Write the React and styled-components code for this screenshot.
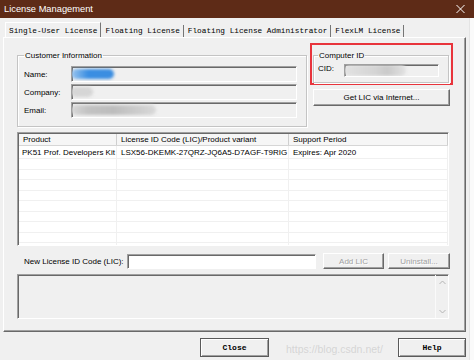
import styled, { createGlobalStyle } from "styled-components";

const GlobalStyle = createGlobalStyle`
  html, body {
    margin: 0;
    padding: 0;
    background: #f0f0f0;
  }
  * {
    box-sizing: border-box;
  }
`;

const Window = styled.div`
  width: 474px;
  height: 360px;
  display: flex;
  flex-direction: column;
  background: #f0f0f0;
  font-family: "Liberation Sans", Arial, sans-serif;
  font-size: 8px;
  color: #000;
  overflow: hidden;
`;

const TitleBar = styled.div`
  height: 18px;
  flex-shrink: 0;
  display: flex;
  align-items: center;
  justify-content: space-between;
  padding: 0 9px 0 4px;
  background: #5e2b17;
  color: #fff;
  font-size: 9.3px;
`;

const Body = styled.div`
  flex: 1;
  display: flex;
  min-height: 0;
`;

const Main = styled.div`
  flex: 1;
  display: flex;
  flex-direction: column;
  padding-top: 4px;
  min-width: 0;
`;

const Edge = styled.div`
  width: 5px;
  background: #fafafa;
  border-left: 1px solid #e4e4e4;
`;

const TabStrip = styled.div`
  height: 15px;
  display: flex;
  align-items: flex-end;
  padding-left: 5px;
`;

const Tab = styled.div`
  height: ${({ $active }) => ($active ? "15px" : "12px")};
  display: flex;
  align-items: flex-end;
  padding: 0 3px 1px ${({ $active }) => ($active ? "3px" : "4px")};
  font-family: "Liberation Mono", "Courier New", monospace;
  font-size: 7.75px;
  line-height: 9px;
  white-space: nowrap;
  border-right: 1px solid #767676;
  border-top: ${({ $active }) => ($active ? "1px solid #fff" : "none")};
  border-left: ${({ $active }) => ($active ? "1px solid #fff" : "none")};
`;

const Panel = styled.div`
  flex: 1;
  margin: 0 3px;
  display: flex;
  flex-direction: column;
  padding: 5px 12px 12px 13px;
  border: 1px solid;
  border-color: #fff #696969 #696969 #fff;
  box-shadow: inset -1px -1px 0 #a0a0a0;
`;

const TopRow = styled.div`
  display: flex;
  align-items: flex-start;
  gap: 3px;
`;

const Group = styled.fieldset`
  margin: 0;
  min-width: 0;
  border: 1px solid #c4c4c4;
  box-shadow: inset 1px 1px 0 #fff, 1px 1px 0 #fff;
`;

const Legend = styled.legend`
  padding: 0 1px;
  font-size: 8px;
  line-height: 11px;
`;

const CustomerGroup = styled(Group)`
  width: 290px;
  height: 77.5px;
  margin-top: 6.5px;
  padding: 5.5px 9px 0 6px;
  display: flex;
  flex-direction: column;
  gap: 2px;
`;

const FieldRow = styled.div`
  height: 16px;
  display: flex;
  align-items: center;
`;

const Label = styled.span`
  width: ${({ $w }) => $w}px;
  flex-shrink: 0;
  white-space: nowrap;
`;

const Field = styled.div`
  width: ${({ $w }) => $w}px;
  height: ${({ $h }) => $h}px;
  display: flex;
  align-items: center;
  border: 1px solid;
  border-color: #a0a0a0 #fff #fff #a0a0a0;
  box-shadow: inset 1px 1px 0 #696969;
  background: ${({ $bg }) => $bg || "transparent"};
  overflow: hidden;
`;

const Blur = styled.div`
  width: ${({ $w }) => $w}px;
  height: ${({ $h }) => $h || 10}px;
  margin-left: -1px;
  border-radius: 5px;
  background: ${({ $c }) => $c};
  filter: blur(1.4px);
`;

const RightCol = styled.div`
  width: 143px;
  display: flex;
  flex-direction: column;
  gap: 4px;
`;

const RedBox = styled.div`
  height: 42px;
  padding: 4.5px 2px 0 1px;
  border: 2px solid #e8343c;
`;

const CidGroup = styled(Group)`
  height: 33.5px;
  padding: 3.5px 8px 0 4px;
  display: flex;
  align-items: flex-start;
`;

const Button = styled.button`
  font-family: ${({ $mono }) =>
    $mono ? '"Liberation Mono", "Courier New", monospace' : "inherit"};
  font-size: 8px;
  font-weight: ${({ $mono }) => ($mono ? "bold" : "normal")};
  width: ${({ $w }) => ($w ? `${$w}px` : "auto")};
  height: ${({ $h }) => $h || 17}px;
  margin: 0;
  padding: 0;
  background: #f0f0f0;
  color: ${({ disabled }) => (disabled ? "#a0a0a0" : "#000")};
  text-shadow: ${({ disabled }) => (disabled ? "1px 1px 0 #fff" : "none")};
  border: 1px solid;
  border-color: ${({ $strong }) =>
    $strong ? "#5a5a5a" : "#fff #696969 #696969 #fff"};
  box-shadow: ${({ $strong }) =>
    $strong
      ? "inset 1px 1px 0 #fff, inset -1px -1px 0 #a0a0a0"
      : "inset -1px -1px 0 #a0a0a0"};
  cursor: default;
`;

const GetLicButton = styled(Button)`
  margin-left: 3px;
  width: 137px;
`;

const List = styled.div`
  margin-top: 5px;
  width: 432px;
  height: 114px;
  display: flex;
  flex-direction: column;
  background: #fff;
  border: 1px solid;
  border-color: #a0a0a0 #fff #fff #a0a0a0;
  box-shadow: inset 1px 1px 0 #696969;
  padding: 1px 0 0 1px;
  overflow: hidden;
`;

const ListRow = styled.div`
  display: grid;
  grid-template-columns: 98px 172px 1fr;
  height: ${({ $h }) => $h}px;
  flex-shrink: 0;
  background: ${({ $head }) => ($head ? "#f6f6f6" : "#fff")};
  border-bottom: 1px solid ${({ $head }) => ($head ? "#d6d6d6" : "#f0f0f0")};
`;

const Cell = styled.div`
  padding-left: ${({ $pad }) => $pad || 4}px;
  display: flex;
  align-items: center;
  white-space: nowrap;
  overflow: hidden;
  border-right: 1px solid ${({ $head }) => ($head ? "#cfcfcf" : "#f0f0f0")};
`;

const LicRow = styled.div`
  margin-top: 7px;
  height: 16px;
  display: flex;
  align-items: center;
  gap: 4px;
  padding-left: 7px;
`;

const LicInput = styled(Field)`
  margin-left: -4px;
  margin-right: 3px;
`;

const MsgBox = styled.div`
  margin-top: 5px;
  width: 432px;
  height: 45px;
  display: flex;
  justify-content: flex-end;
  border: 1px solid;
  border-color: #a0a0a0 #fff #fff #a0a0a0;
  box-shadow: inset 1px 1px 0 #696969;
  background: #f0f0f0;
`;

const ScrollBar = styled.div`
  width: 13px;
  display: flex;
  flex-direction: column;
  justify-content: space-between;
  align-items: center;
  padding: 5px 0 4px;
  border-left: 1px solid #fafafa;
`;

const Footer = styled.div`
  position: relative;
  height: 29px;
  flex-shrink: 0;
  display: grid;
  grid-template-columns: 1fr auto 1fr;
  align-items: start;
  padding-top: 6px;
`;

const HelpButton = styled(Button)`
  justify-self: end;
  margin-right: 3px;
`;

const Watermark = styled.div`
  position: absolute;
  left: 286px;
  top: 11px;
  font-size: 10.5px;
  color: rgba(190, 190, 190, 0.55);
  white-space: nowrap;
  pointer-events: none;
`;

const Chevron = ({ up }) => (
  <svg width="7" height="5" viewBox="0 0 7 5">
    <path
      d={up ? "M0.5 4 L3.5 1 L6.5 4" : "M0.5 1 L3.5 4 L6.5 1"}
      fill="none"
      stroke="#b4b4b4"
      strokeWidth="1"
    />
  </svg>
);

const emptyRows = Array.from({ length: 9 });

export default function App() {
  return (
    <>
      <GlobalStyle />
      <Window>
        <TitleBar>
          <span>License Management</span>
          <svg width="9" height="8" viewBox="0 0 9 8">
            <path d="M0.5 0 L8.5 8 M8.5 0 L0.5 8" stroke="#fff" strokeWidth="1" />
          </svg>
        </TitleBar>
        <Body>
          <Main>
            <TabStrip>
              <Tab $active>Single-User License</Tab>
              <Tab>Floating License</Tab>
              <Tab>Floating License Administrator</Tab>
              <Tab>FlexLM License</Tab>
            </TabStrip>
            <Panel>
              <TopRow>
                <CustomerGroup>
                  <Legend>Customer Information</Legend>
                  <FieldRow>
                    <Label $w={47}>Name:</Label>
                    <Field $w={226} $h={16}>
                      <Blur $w={43} $c="linear-gradient(90deg, #9cc6ee, #3a8ee2 40%, #3b8de0)" />
                    </Field>
                  </FieldRow>
                  <FieldRow>
                    <Label $w={47}>Company:</Label>
                    <Field $w={226} $h={16}>
                      <Blur $w={22} $c="#d6d6d6" />
                    </Field>
                  </FieldRow>
                  <FieldRow>
                    <Label $w={47}>Email:</Label>
                    <Field $w={226} $h={16}>
                      <Blur $w={85} $c="linear-gradient(90deg, #d8d8d8, #c2c2c2 20%, #bdbdbd 50%, #cdcdcd 80%, #d9d9d9)" />
                    </Field>
                  </FieldRow>
                </CustomerGroup>
                <RightCol>
                  <RedBox>
                    <CidGroup>
                      <Legend>Computer ID</Legend>
                      <Label $w={26}>CID:</Label>
                      <Field $w={95} $h={13}>
                        <Blur $w={62} $h={11} $c="linear-gradient(90deg, #e2e2e2, #d4d4d4 50%, #cacaca 70%, #e2e2e2)" />
                      </Field>
                    </CidGroup>
                  </RedBox>
                  <GetLicButton>Get LIC via Internet...</GetLicButton>
                </RightCol>
              </TopRow>

              <List>
                <ListRow $head $h={12}>
                  <Cell $head>Product</Cell>
                  <Cell $head>License ID Code (LIC)/Product variant</Cell>
                  <Cell $head>Support Period</Cell>
                </ListRow>
                <ListRow $h={13}>
                  <Cell $pad={3}>PK51 Prof. Developers Kit</Cell>
                  <Cell>LSX56-DKEMK-27QRZ-JQ6A5-D7AGF-T9RIG</Cell>
                  <Cell>Expires: Apr 2020</Cell>
                </ListRow>
                {emptyRows.map((_, i) => (
                  <ListRow key={i} $h={10.5}>
                    <Cell />
                    <Cell />
                    <Cell />
                  </ListRow>
                ))}
              </List>

              <LicRow>
                <Label $w={103}>New License ID Code (LIC):</Label>
                <LicInput $w={189} $h={15} $bg="#fff" />
                <Button $w={61} $h={16} disabled>
                  Add LIC
                </Button>
                <Button $w={62} $h={16} disabled>
                  Uninstall...
                </Button>
              </LicRow>

              <MsgBox>
                <ScrollBar>
                  <Chevron up />
                  <Chevron />
                </ScrollBar>
              </MsgBox>
            </Panel>
            <Footer>
              <span />
              <Button $mono $strong $w={69} $h={19}>
                Close
              </Button>
              <HelpButton $mono $strong $w={68} $h={19}>
                Help
              </HelpButton>
              <Watermark>https://blog.csdn.net/</Watermark>
            </Footer>
          </Main>
          <Edge />
        </Body>
      </Window>
    </>
  );
}
